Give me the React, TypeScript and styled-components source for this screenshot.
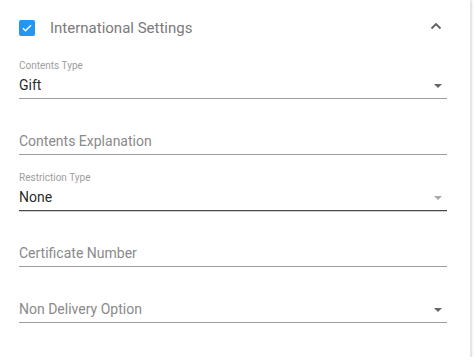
import React, { useState } from 'react';
import styled, { createGlobalStyle } from 'styled-components';

const GlobalStyle = createGlobalStyle`
  html, body {
    margin: 0;
    padding: 0;
    background: #ffffff;
    font-family: Roboto, "Liberation Sans", Arial, sans-serif;
  }
`;

const Card = styled.div`
  box-sizing: border-box;
  width: 471px;
  height: 357px;
  background: #fff;
  border-right: 1px solid #e6e6e6;
  box-shadow: 0 1px 3px rgba(0, 0, 0, 0.18), 0 1px 2px rgba(0, 0, 0, 0.12);
  padding: 0 23px 0 19px;
`;

const Header = styled.div`
  box-sizing: border-box;
  display: flex;
  align-items: flex-start;
  height: 43px;
  padding-top: 20px;
`;

const CheckBox = styled.div`
  width: 16px;
  height: 16px;
  border-radius: 2px;
  background: #2196f3;
  display: flex;
  align-items: center;
  justify-content: center;
`;

const Title = styled.div`
  margin-left: 15px;
  margin-top: -1px;
  font-size: 15px;
  line-height: 18px;
  color: #7a7a7a;
  flex: 1;
`;

const IconButton = styled.button`
  border: 0;
  background: none;
  padding: 0;
  width: 16px;
  height: 12px;
  display: flex;
  align-items: center;
  justify-content: center;
  margin-right: 3px;
  cursor: pointer;
`;

const Field = styled.div<{ $focused?: boolean }>`
  position: relative;
  height: 56px;
  display: flex;
  flex-direction: column;
  justify-content: flex-end;
  border-bottom: 1px solid ${({ $focused }) => ($focused ? '#4a4a4a' : '#9e9e9e')};
  box-shadow: ${({ $focused }) => ($focused ? '0 1px 0 rgba(0,0,0,0.18)' : 'none')};
  padding-bottom: 4px;
  box-sizing: border-box;
`;

const Label = styled.div`
  font-size: 10px;
  line-height: 12px;
  color: #9e9e9e;
  margin-bottom: 4px;
`;

const Value = styled.div<{ $placeholder?: boolean }>`
  font-size: 14px;
  line-height: 18px;
  color: ${({ $placeholder }) => ($placeholder ? '#8a8a8a' : 'rgba(0,0,0,0.87)')};
  padding-right: 24px;
`;

const Arrow = styled.div<{ $light?: boolean }>`
  position: absolute;
  right: 5px;
  bottom: 10px;
  width: 0;
  height: 0;
  border-left: 4.5px solid transparent;
  border-right: 4.5px solid transparent;
  border-top: 4.5px solid ${({ $light }) => ($light ? '#a8a8a8' : '#666')};
`;

type FieldProps = {
  label?: string;
  value?: string;
  placeholder?: string;
  select?: boolean;
  focused?: boolean;
  lightArrow?: boolean;
};

const FormField: React.FC<FieldProps> = ({ label, value, placeholder, select, focused, lightArrow }) => (
  <Field $focused={focused}>
    {label && <Label>{label}</Label>}
    {value ? <Value>{value}</Value> : <Value $placeholder>{placeholder}</Value>}
    {select && <Arrow $light={lightArrow} />}
  </Field>
);

const App: React.FC = () => {
  const [open, setOpen] = useState<boolean>(true);

  return (
    <>
      <GlobalStyle />
      <Card>
        <Header>
          <CheckBox>
            <svg width="12" height="12" viewBox="0 0 24 24">
              <path d="M4 12.5l5 5L20 6.5" fill="none" stroke="#fff" strokeWidth="3" />
            </svg>
          </CheckBox>
          <Title>International Settings</Title>
          <IconButton onClick={() => setOpen(!open)}>
            <svg width="12" height="8" viewBox="0 0 12 8">
              <path d="M1.5 6.5L6 2l4.5 4.5" fill="none" stroke="#616161" strokeWidth="1.8" />
            </svg>
          </IconButton>
        </Header>
        {open && (
          <>
            <FormField label="Contents Type" value="Gift" select />
            <FormField placeholder="Contents Explanation" />
            <FormField label="Restriction Type" value="None" select focused lightArrow />
            <FormField placeholder="Certificate Number" />
            <FormField placeholder="Non Delivery Option" select />
          </>
        )}
      </Card>
    </>
  );
};

export default App;
